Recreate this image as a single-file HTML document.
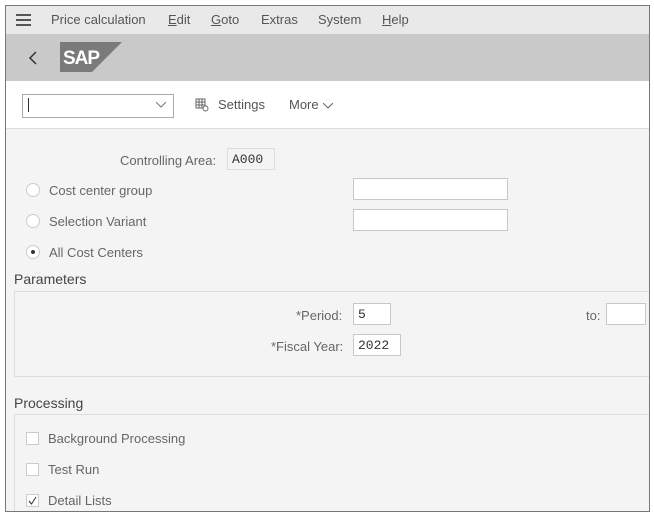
<!DOCTYPE html><html><head><style>
body{margin:0;width:654px;height:516px;background:#fff;font-family:"Liberation Sans",sans-serif;overflow:hidden;position:relative}
.frame{position:absolute;left:5px;top:5px;width:643px;height:505px;border:1px solid #777;background:#f4f4f4;overflow:hidden}
.a{position:absolute}
.t{position:absolute;font-size:13px;color:#666;white-space:nowrap}
.inp{position:absolute;background:#fff;border:1px solid #c8c8c8;height:22px;box-sizing:border-box;font-size:13px;color:#333;padding:3px 4px;font-family:"Liberation Mono",monospace}
.rad{position:absolute;width:12px;height:12px;border:1px solid #ccc;border-radius:50%;background:#fff}
.cb{position:absolute;width:11px;height:11px;border:1px solid #ccc;background:#fff}
</style></head><body>
<div class="frame">
<div class="a" style="left:0;top:0;width:643px;height:28px;background:#e9e9e9"></div>
<div class="a" style="left:10px;top:8px;width:15px;height:2px;background:#555;box-shadow:0 5px 0 #555,0 10px 0 #555"></div>
<div class="t" style="left:45px;top:6px;color:#555">Price calculation</div>
<div class="t" style="left:162px;top:6px;color:#555"><u>E</u>dit</div>
<div class="t" style="left:205px;top:6px;color:#555"><u>G</u>oto</div>
<div class="t" style="left:255px;top:6px;color:#555">Extras</div>
<div class="t" style="left:312px;top:6px;color:#555">System</div>
<div class="t" style="left:376px;top:6px;color:#555"><u>H</u>elp</div>
<div class="a" style="left:0;top:28px;width:643px;height:47px;background:#c9c9c9"></div>
<svg class="a" style="left:22px;top:45px" width="10" height="14"><path d="M8 1 L2 7 L8 13" stroke="#333" stroke-width="1.5" fill="none"/></svg>
<svg class="a" style="left:54px;top:36px" width="62" height="30"><polygon points="0,0 62,0 32,30 0,30" fill="#7a7a7a"/><text x="3" y="22" font-family="Liberation Sans" font-weight="bold" font-size="19" fill="#fff" letter-spacing="-1">SAP</text></svg>
<div class="a" style="left:0;top:75px;width:643px;height:47px;background:#fff;border-bottom:1px solid #ddd"></div>
<div class="a" style="left:16px;top:88px;width:150px;height:22px;border:1px solid #aaa;background:#fff"></div>
<div class="a" style="left:22px;top:92px;width:1px;height:14px;background:#333"></div>
<svg class="a" style="left:150px;top:96px" width="10" height="6"><path d="M0 0 L5 5 L10 0" stroke="#777" fill="none"/></svg>
<svg class="a" style="left:189px;top:92px" width="14" height="14"><path d="M1 1h9v9H1zM1 4h9M1 7h9M4 1v9M7 1v9" stroke="#666" fill="none"/><circle cx="10.5" cy="10.5" r="2.5" fill="#fff" stroke="#666"/></svg>
<div class="t" style="left:212px;top:91px;color:#555">Settings</div>
<div class="t" style="left:283px;top:91px;color:#555">More</div>
<svg class="a" style="left:317px;top:97px" width="10" height="6"><path d="M0 0 L5 5 L10 0" stroke="#666" fill="none"/></svg>
<div class="t" style="left:114px;top:147px">Controlling Area:</div>
<div class="inp" style="left:221px;top:142px;width:48px;background:#f4f4f4;border-color:#ddd">A000</div>
<div class="rad" style="left:20px;top:177px"></div><div class="t" style="left:43px;top:177px">Cost center group</div>
<div class="inp" style="left:347px;top:172px;width:155px"></div>
<div class="rad" style="left:20px;top:208px"></div><div class="t" style="left:43px;top:208px">Selection Variant</div>
<div class="inp" style="left:347px;top:203px;width:155px"></div>
<div class="rad" style="left:20px;top:239px"></div><div class="a" style="left:25px;top:244px;width:4px;height:4px;border-radius:50%;background:#333"></div><div class="t" style="left:43px;top:239px">All Cost Centers</div>
<div class="t" style="left:8px;top:265px;font-size:14px;color:#444">Parameters</div>
<div class="a" style="left:8px;top:285px;width:640px;height:84px;border:1px solid #ddd;border-right:none"></div>
<div class="t" style="left:290px;top:302px">*Period:</div>
<div class="inp" style="left:347px;top:297px;width:38px">5</div>
<div class="t" style="left:580px;top:302px">to:</div>
<div class="inp" style="left:600px;top:297px;width:40px"></div>
<div class="t" style="left:265px;top:333px">*Fiscal Year:</div>
<div class="inp" style="left:347px;top:328px;width:48px">2022</div>
<div class="t" style="left:8px;top:389px;font-size:14px;color:#444">Processing</div>
<div class="a" style="left:8px;top:408px;width:640px;height:120px;border:1px solid #ddd;border-right:none"></div>
<div class="cb" style="left:20px;top:426px"></div><div class="t" style="left:42px;top:425px">Background Processing</div>
<div class="cb" style="left:20px;top:457px"></div><div class="t" style="left:42px;top:456px">Test Run</div>
<div class="cb" style="left:20px;top:488px"></div><svg class="a" style="left:22px;top:490px" width="9" height="9"><path d="M1 5 L3.5 8 L8 1" stroke="#333" fill="none"/></svg><div class="t" style="left:42px;top:487px">Detail Lists</div>
</div>
</body></html>
